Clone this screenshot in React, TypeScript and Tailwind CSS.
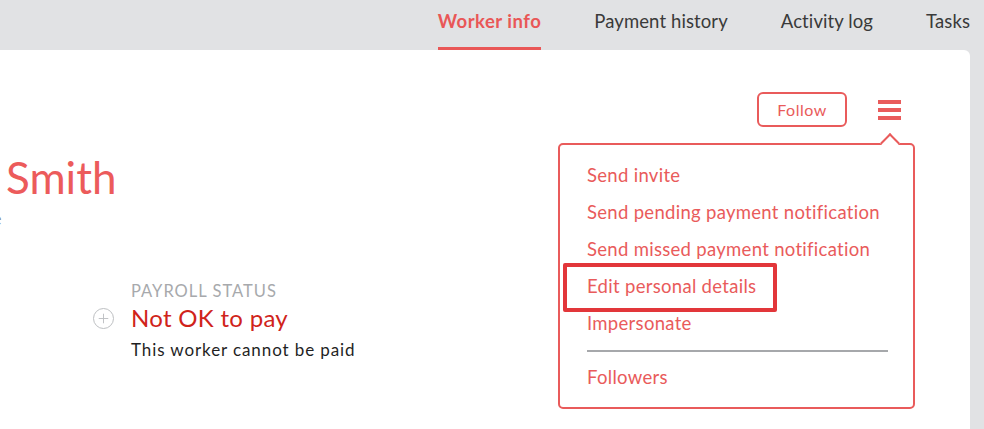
import { Plus } from "lucide-react";

const tabs = [
  { label: "Worker info", active: true },
  { label: "Payment history", active: false },
  { label: "Activity log", active: false },
  { label: "Tasks", active: false },
];

const menuItems = [
  "Send invite",
  "Send pending payment notification",
  "Send missed payment notification",
  "Edit personal details",
  "Impersonate",
];

function ActionMenu() {
  return (
    <div className="absolute left-[558px] top-[93px] w-[357px] rounded-[5px] border-2 border-[#e95b5b] bg-white pt-[12px] pb-[11px] pl-[27px] pr-[25px] text-[18.5px] tracking-[0.3px] text-[#e95b5b]">
      <div className="absolute -top-[9px] left-[323px] h-[14px] w-[14px] rotate-45 border-l-2 border-t-2 border-[#e95b5b] bg-white" />
      {menuItems.map((item) => (
        <div key={item} className="flex h-[37px] items-center">
          {item}
        </div>
      ))}
      <div className="mt-[8px] h-[2px] bg-[#a6a8ab]" />
      <div className="mt-[7px] flex h-[37px] items-center">Followers</div>
      {/* annotation box round "Edit personal details" */}
      <div className="absolute left-[3px] top-[118px] h-[49px] w-[214px] rounded-[2px] border-4 border-[#e2363a]" />
    </div>
  );
}

export default function App() {
  return (
    <div className="h-[429px] w-[984px] overflow-hidden bg-[#e1e2e4] font-['Lato',sans-serif]">
      <nav className="flex h-[50px] justify-end gap-[53px] pr-[14px] text-[18.5px]">
        {tabs.map((tab) => (
          <div
            key={tab.label}
            className={
              tab.active
                ? "flex h-full items-center border-b-[3px] border-[#e95757] pb-[3px] font-bold tracking-[0.5px] text-[#e95757]"
                : "flex h-full items-center border-b-[3px] border-transparent pb-[3px] tracking-[0.1px] text-[#3a3a3a]"
            }
          >
            {tab.label}
          </div>
        ))}
      </nav>

      <main className="relative mr-[14px] h-[379px] rounded-tr-[6px] bg-white">
        <div className="flex items-center justify-end gap-[31px] pr-[69px] pt-[42px]">
          <button
            type="button"
            className="h-[35px] w-[90px] rounded-[6px] border-2 border-[#e95b5b] text-[16px] tracking-[0.5px] text-[#e95b5b]"
          >
            Follow
          </button>
          <div className="flex w-[23px] flex-col gap-[4px]">
            <span className="h-[4px] bg-[#e95b5b]" />
            <span className="h-[4px] bg-[#e95b5b]" />
            <span className="h-[4px] bg-[#e95b5b]" />
          </div>
        </div>

        <div className="mt-[24px] pl-[6px] text-[44px] leading-[1.2] text-[#ec5b5b]">Smith</div>
        <div className="-ml-[8px] mt-[4px] text-[18px] leading-[1.2] text-[#8a8c8f]">e</div>

        <div className="ml-[93px] mt-[53px] flex gap-[17px]">
          <div className="mt-[26px] flex h-[21px] w-[21px] items-center justify-center rounded-full border-[1.5px] border-[#bdbfc2] text-[#bdbfc2]">
            <Plus size={15} strokeWidth={1.5} />
          </div>
          <div>
            <div className="text-[16.5px] leading-[1.2] tracking-[1px] text-[#a7a9ac]">PAYROLL STATUS</div>
            <div className="mt-[2px] text-[24px] leading-[1.2] tracking-[0.3px] text-[#d0231a]">Not OK to pay</div>
            <div className="mt-[7px] text-[17px] leading-[1.2] tracking-[0.9px] text-[#1f1f1f]">
              This worker cannot be paid
            </div>
          </div>
        </div>

        <ActionMenu />
      </main>
    </div>
  );
}
